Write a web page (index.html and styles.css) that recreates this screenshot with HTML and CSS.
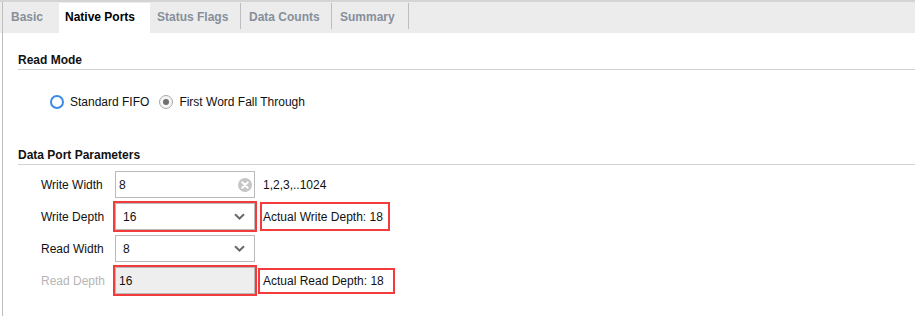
FILE: index.html
```html
<!DOCTYPE html>
<html lang="en">
<head>
  <meta charset="UTF-8" />
  <title>FIFO Generator - Native Ports</title>
  <link rel="stylesheet" href="styles.css">
</head>
<body>
  <div class="frame">
    <div class="panel">
      <div class="tabs">
        <div class="tab tab-basic">Basic</div>
        <div class="tab active tab-native">Native Ports</div>
        <div class="tab sep tab-status">Status Flags</div>
        <div class="tab sep tab-data">Data Counts</div>
        <div class="tab sep tab-summary">Summary</div>
      </div>

      <div class="content">
        <div class="section-title">Read Mode</div>
        <div class="radios">
          <span class="radio"></span>
          <span class="radio-label">Standard FIFO</span>
          <span class="radio checked"><span class="dot"></span></span>
          <span class="radio-label">First Word Fall Through</span>
        </div>

        <div class="section-title second">Data Port Parameters</div>
        <div class="params">
          <div class="label">Write Width</div>
          <div class="field">
            <span>8</span>
            <svg class="clear" width="14" height="14" viewBox="0 0 14 14">
              <circle cx="7" cy="7" r="7" fill="#c6c6c6"/>
              <path d="M4.3 4.3 L9.7 9.7 M9.7 4.3 L4.3 9.7" stroke="#fff" stroke-width="2" stroke-linecap="round"/>
            </svg>
          </div>
          <div class="hint">1,2,3,..1024</div>

          <div class="label">Write Depth</div>
          <div class="field select marked">
            <span>16</span>
            <svg class="chevron" width="11" height="7" viewBox="0 0 11 7">
              <path d="M1 1.2 L5.5 5.5 L10 1.2" fill="none" stroke="#6b6b6b" stroke-width="2"/>
            </svg>
          </div>
          <div class="actual write">Actual Write Depth: 18</div>

          <div class="label">Read Width</div>
          <div class="field select">
            <span>8</span>
            <svg class="chevron" width="11" height="7" viewBox="0 0 11 7">
              <path d="M1 1.2 L5.5 5.5 L10 1.2" fill="none" stroke="#6b6b6b" stroke-width="2"/>
            </svg>
          </div>
          <div></div>

          <div class="label disabled">Read Depth</div>
          <div class="field readonly marked">
            <span>16</span>
          </div>
          <div class="actual read">Actual Read Depth: 18</div>
        </div>
      </div>
    </div>
  </div>
</body>
</html>
```

FILE: styles.css
```css
body {
  margin: 0;
  padding: 0;
  font-family: "Liberation Sans", Arial, sans-serif;
  font-size: 12px;
  color: #111;
  background: #fff;
}
.frame {
  border-top: 2px solid #d4d4d4;
  height: 314px;
  padding-left: 2px;
  background: linear-gradient(#ececec 0, #ececec 31px, #fff 31px);
}
.panel {
  border-left: 1px solid #bdbdbd;
  height: 100%;
  background: #fff;
}
.tabs {
  display: flex;
  align-items: flex-start;
  height: 31px;
  background: #ececec;
}
.tab {
  box-sizing: border-box;
  height: 26px;
  margin-top: 1px;
  line-height: 28px;
  padding-left: 8px;
  font-weight: bold;
  color: #868f9a;
}
.tab.sep {
  border-right: 1px solid #bdbdbd;
}
.tab.active {
  height: 30px;
  background: #fff;
  color: #000;
  padding-left: 6px;
}
.tab-basic { width: 56px; }
.tab-native { width: 91px; }
.tab-status { width: 91px; padding-left: 7px; }
.tab-data { width: 91px; }
.tab-summary { width: 77px; }

.content {
  padding: 20px 0 0 15px;
}
.section-title {
  font-weight: bold;
  line-height: 14px;
  padding-bottom: 2px;
  border-bottom: 1px solid #d2d2d2;
}
.section-title.second {
  margin-top: 38px;
}
.radios {
  display: flex;
  align-items: center;
  height: 16px;
  margin-top: 24px;
  padding-left: 32px;
}
.radio {
  box-sizing: border-box;
  width: 14px;
  height: 14px;
  border: 2px solid #3a8be6;
  border-radius: 50%;
  background: #fff;
}
.radio.checked {
  display: flex;
  align-items: center;
  justify-content: center;
  border: 1px solid #a9a9a9;
  background: #f5f5f5;
  margin-left: 10px;
}
.dot {
  width: 6px;
  height: 6px;
  border-radius: 50%;
  background: #6f6f6f;
}
.radio-label {
  margin-left: 6px;
}

.params {
  display: grid;
  grid-template-columns: 97px 140px auto;
  grid-auto-rows: 27px;
  row-gap: 5px;
  margin-top: 6px;
  align-items: center;
}
.label {
  padding-left: 23px;
}
.label.disabled {
  color: #b5b5b5;
}
.field {
  box-sizing: border-box;
  height: 27px;
  display: flex;
  align-items: center;
  justify-content: space-between;
  border: 1px solid #bababa;
  background: #fff;
  padding: 0 2px 0 3px;
}
.field.select {
  padding: 0 9px 0 7px;
}
.field.readonly {
  background: #eeeeee;
  padding-left: 3px;
}
.field.marked {
  outline: 2px solid #f33b3b;
}
.hint {
  margin-left: 8px;
}
.actual {
  box-sizing: border-box;
  justify-self: start;
  display: flex;
  align-items: center;
  border: 2px solid #f33b3b;
  padding: 0 5px 0 1px;
}
.actual.write {
  height: 29px;
  margin-left: 5px;
}
.actual.read {
  height: 26px;
  margin-left: 3px;
  padding: 0 9px 0 3px;
}
```
